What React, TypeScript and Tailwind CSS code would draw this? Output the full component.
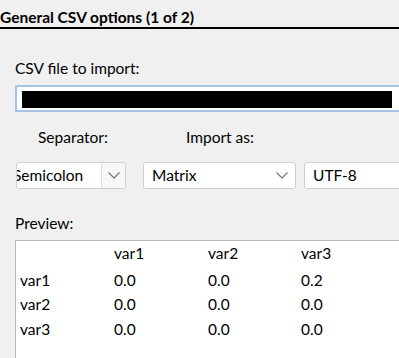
const rows = [
  { name: 'var1', values: ['0.0', '0.0', '0.2'] },
  { name: 'var2', values: ['0.0', '0.0', '0.0'] },
  { name: 'var3', values: ['0.0', '0.0', '0.0'] },
];

function Chevron() {
  return (
    <svg width="12" height="7" viewBox="0 0 12 7" className="text-[#707070]">
      <polyline points="0.5,0.5 6,6 11.5,0.5" fill="none" stroke="currentColor" strokeWidth="1.1" />
    </svg>
  );
}

export default function App() {
  return (
    <div
      className="w-[399px] h-[358px] overflow-hidden bg-[#f0f0f0] text-[15.5px] text-black"
      style={{ fontFamily: 'Lato, "Noto Sans", sans-serif' }}
    >
      {/* Header */}
      <div className="pt-[7px] h-[29px] border-b-2 border-black">
        <h1 className="font-bold leading-[20px] whitespace-nowrap">General CSV options (1 of 2)</h1>
      </div>

      <div className="pl-[15px]">
        <p className="mt-[29px] leading-[20px]">CSV file to import:</p>

        {/* File path (redacted) */}
        <div className="mt-[7px] w-[400px] h-[27px] bg-white border-2 border-[#a6c3e6] pl-[5px] pt-[4px]">
          <div className="w-[370px] h-[17px] bg-black" />
        </div>

        <div className="mt-[15px] flex leading-[20px]">
          <span className="shrink-0 ml-[23px] w-[148px]">Separator:</span>
          <span className="shrink-0">Import as:</span>
        </div>

        <div className="mt-[15px] flex h-[27px]">
          <div className="shrink-0 ml-[1px] w-[110px] flex bg-white border border-[#cfcfcf] rounded-[3px] overflow-hidden">
            <div className="flex-1 overflow-hidden flex items-center">
              <span className="ml-[-4px] whitespace-nowrap">Semicolon</span>
            </div>
            <div className="w-[24px] flex items-center justify-center border-l border-[#dcdcdc] bg-[#f7f7f7]">
              <Chevron />
            </div>
          </div>

          <div className="shrink-0 ml-[17px] w-[153px] flex items-center justify-between bg-white border border-[#cfcfcf] rounded-[3px] pl-[8px] pr-[7px]">
            <span>Matrix</span>
            <Chevron />
          </div>

          <div className="shrink-0 ml-[8px] w-[120px] flex items-center bg-white border border-[#cfcfcf] rounded-[3px] pl-[8px]">
            <span>UTF-8</span>
          </div>
        </div>

        <p className="mt-[24px] leading-[20px]">Preview:</p>

        {/* Preview table */}
        <div className="mt-[7px] w-[400px] h-[140px] bg-white border border-[#b9b9b9] pt-[2px] pl-[4px]">
          <div className="grid grid-cols-[94px_94px_93px_94px] h-[27px] leading-[20px]">
            <span />
            <span>var1</span>
            <span>var2</span>
            <span>var3</span>
          </div>
          {rows.map((row, i) => (
            <div
              key={row.name}
              className={`grid grid-cols-[94px_94px_93px_94px] leading-[20px] ${i === 0 ? 'h-[24px]' : 'h-[25px]'}`}
            >
              <span>{row.name}</span>
              {row.values.map((v, j) => (
                <span key={j}>{v}</span>
              ))}
            </div>
          ))}
        </div>
      </div>
    </div>
  );
}
